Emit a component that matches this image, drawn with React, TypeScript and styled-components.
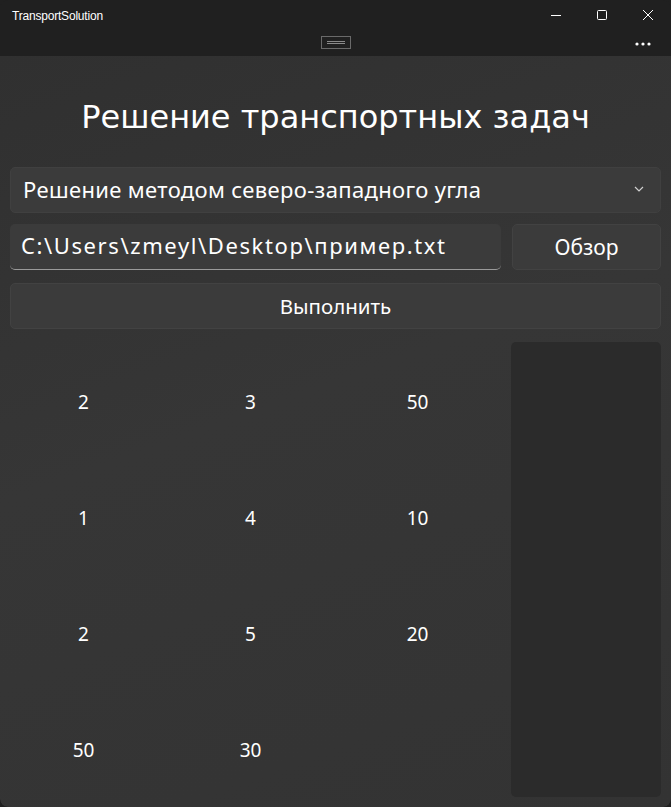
import styled, { createGlobalStyle } from "styled-components";

const GlobalStyle = createGlobalStyle`
  html, body {
    margin: 0;
    padding: 0;
    background: #202020;
  }
  body {
    font-family: "Noto Sans", "Open Sans", sans-serif;
    color: #ffffff;
  }
`;

const cells = [
  ["2", "3", "50"],
  ["1", "4", "10"],
  ["2", "5", "20"],
  ["50", "30", ""],
];

function App() {
  return (
    <>
      <GlobalStyle />
      <Window>
        <TitleBar>
          <AppName>TransportSolution</AppName>
          <Caption>
            <CaptionButton>
              <svg width="10" height="10" viewBox="0 0 10 10">
                <path d="M0 5.5h10" stroke="#fff" strokeWidth="1" />
              </svg>
            </CaptionButton>
            <CaptionButton>
              <svg width="10" height="10" viewBox="0 0 10 10">
                <rect x="0.5" y="0.5" width="9" height="9" rx="1" fill="none" stroke="#fff" strokeWidth="1" />
              </svg>
            </CaptionButton>
            <CaptionButton>
              <svg width="10" height="10" viewBox="0 0 10 10">
                <path d="M0 0L10 10M10 0L0 10" stroke="#fff" strokeWidth="1" />
              </svg>
            </CaptionButton>
          </Caption>
        </TitleBar>
        <CommandBar>
          <DragHandle>
            <svg width="30" height="13" viewBox="0 0 30 13">
              <rect x="0.5" y="0.5" width="29" height="12" fill="none" stroke="#6a6a6a" />
              <path d="M6 5.5h18M6 7.5h18" stroke="#8a8a8a" strokeWidth="1" />
            </svg>
          </DragHandle>
          <More>
            <svg width="16" height="4" viewBox="0 0 16 4">
              <circle cx="2" cy="2" r="1.6" fill="#fff" />
              <circle cx="8" cy="2" r="1.6" fill="#fff" />
              <circle cx="14" cy="2" r="1.6" fill="#fff" />
            </svg>
          </More>
        </CommandBar>
        <Content>
          <Heading>Решение транспортных задач</Heading>
          <Combo>
            <span>Решение методом северо-западного угла</span>
            <svg width="10" height="6" viewBox="0 0 10 6">
              <path d="M1 1l4 4 4-4" fill="none" stroke="#cfcfcf" strokeWidth="1.2" />
            </svg>
          </Combo>
          <FileRow>
            <PathBox>C:\Users\zmeyl\Desktop\пример.txt</PathBox>
            <BrowseButton>Обзор</BrowseButton>
          </FileRow>
          <RunButton>Выполнить</RunButton>
          <Bottom>
            <Matrix>
              {cells.map((row, r) =>
                row.map((v, c) => <Cell key={`${r}-${c}`}>{v}</Cell>)
              )}
            </Matrix>
            <SidePanel />
          </Bottom>
        </Content>
      </Window>
    </>
  );
}

export default App;

const Window = styled.div`
  width: 671px;
  height: 807px;
  display: flex;
  flex-direction: column;
  background: #202020;
  border-radius: 8px;
  overflow: hidden;
`;

const TitleBar = styled.div`
  height: 30px;
  flex: 0 0 30px;
  display: flex;
  align-items: center;
  justify-content: space-between;
  padding-left: 12px;
`;

const AppName = styled.div`
  font-family: "Liberation Sans", sans-serif;
  font-size: 12px;
  letter-spacing: -0.2px;
  margin-top: 2px;
`;

const Caption = styled.div`
  display: flex;
  height: 30px;
`;

const CaptionButton = styled.div`
  width: 46px;
  height: 30px;
  display: flex;
  align-items: center;
  justify-content: center;
`;

const CommandBar = styled.div`
  flex: 0 0 26px;
  position: relative;
  display: flex;
  justify-content: center;
`;

const DragHandle = styled.div`
  margin-top: 2px;
`;

const More = styled.div`
  position: absolute;
  right: 20px;
  top: 12px;
  display: flex;
`;

const Content = styled.div`
  flex: 1;
  min-height: 0;
  display: flex;
  flex-direction: column;
  padding: 0 10px 10px 10px;
  background: linear-gradient(160deg, #303030 0%, #363636 45%, #333333 100%);
  border-radius: 0 0 8px 8px;
`;

const Heading = styled.h1`
  margin: 41px 0 0 0;
  height: 70px;
  flex: 0 0 70px;
  text-align: center;
  font-family: "DejaVu Sans", sans-serif;
  font-weight: normal;
  font-size: 32px;
  line-height: 40px;
`;

const Combo = styled.div`
  flex: 0 0 46px;
  box-sizing: border-box;
  display: flex;
  align-items: center;
  justify-content: space-between;
  padding: 0 16px 2px 12px;
  background: #3b3b3b;
  border: 1px solid #404040;
  border-radius: 5px;
  font-size: 22px;
  letter-spacing: 0.35px;
`;

const FileRow = styled.div`
  flex: 0 0 46px;
  display: flex;
  gap: 11px;
  margin-top: 11px;
  margin-bottom: 13px;
`;

const PathBox = styled.div`
  flex: 1;
  height: 46px;
  box-sizing: border-box;
  display: flex;
  align-items: center;
  padding: 0 11px 4px;
  background: #3b3b3b;
  border-radius: 5px;
  border-bottom: 1px solid #9a9a9a;
  font-size: 22px;
  letter-spacing: 1.6px;
`;

const ButtonBase = styled.div`
  height: 46px;
  box-sizing: border-box;
  display: flex;
  align-items: center;
  justify-content: center;
  background: #3b3b3b;
  border: 1px solid #424242;
  border-radius: 5px;
  font-size: 21px;
  padding-bottom: 1px;
`;

const BrowseButton = styled(ButtonBase)`
  flex: 0 0 149px;
`;

const RunButton = styled(ButtonBase)`
  flex: 0 0 46px;
  font-size: 20.5px;
`;

const Bottom = styled.div`
  flex: 1;
  min-height: 0;
  display: flex;
  gap: 10px;
  margin-top: 13px;
`;

const Matrix = styled.div`
  flex: 1;
  margin-left: -10px;
  margin-top: 2px;
  display: grid;
  grid-template-columns: repeat(3, 167px);
  grid-template-rows: repeat(4, 116px);
`;

const Cell = styled.div`
  display: flex;
  align-items: center;
  justify-content: center;
  font-size: 19px;
`;

const SidePanel = styled.div`
  flex: 0 0 150px;
  background: #2b2b2b;
  border-radius: 5px;
`;
